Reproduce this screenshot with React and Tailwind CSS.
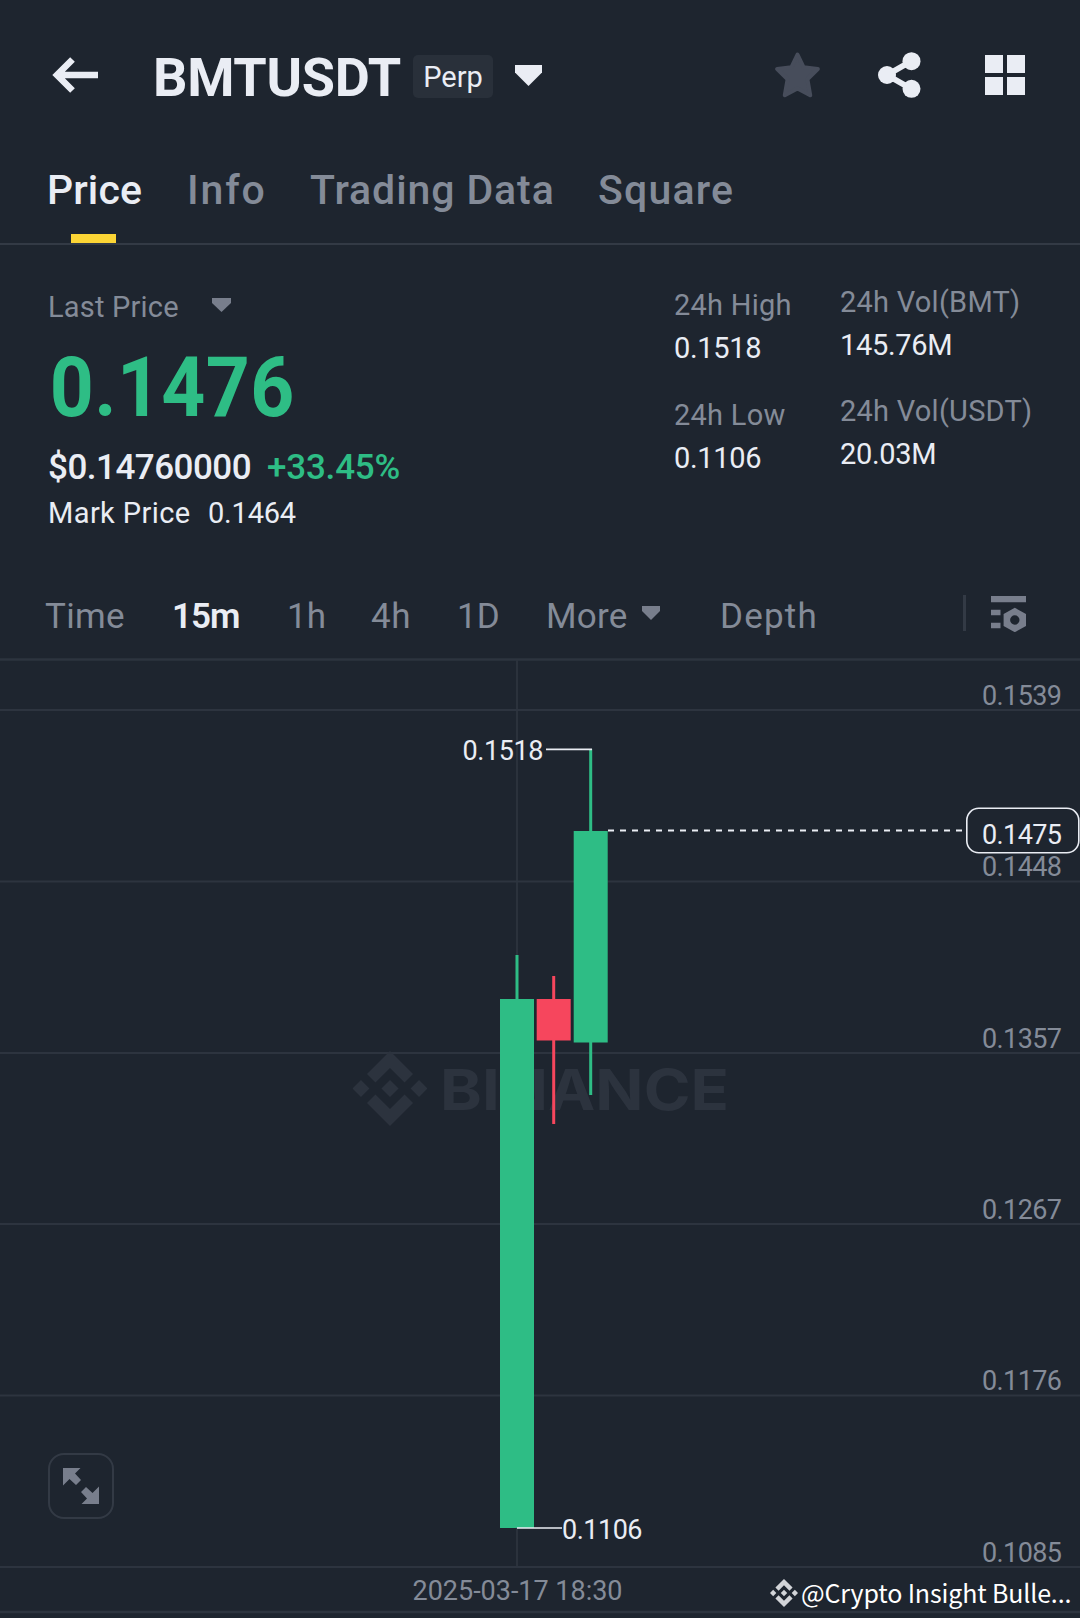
const tabs = [
  { label: 'Price', className: 'w-[140px] tracking-[0.1px]', active: true },
  { label: 'Info', className: 'w-[123px] tracking-[1.9px]' },
  { label: 'Trading Data', className: 'w-[288px] tracking-[0.9px]' },
  { label: 'Square', className: 'tracking-[1.2px]' },
]

const intervals = [
  { label: 'Time', className: 'w-[127px] tracking-[0.3px]' },
  { label: '15m', className: 'w-[115px] font-semibold tracking-[-1px] text-[#eaedf4]' },
  { label: '1h', className: 'w-[84px]' },
  { label: '4h', className: 'w-[86px] tracking-[0.5px]' },
  { label: '1D', className: 'w-[89px]' },
]

const gridLines = [
  { y: 52, label: '0.1539' },
  { y: 223.5, label: '0.1448' },
  { y: 395, label: '0.1357' },
  { y: 566, label: '0.1267' },
  { y: 737.5, label: '0.1176' },
  { y: 909, label: '0.1085' },
]

const candles = [
  { x: 517, top: 341, bottom: 870, high: 297, low: 870, color: '#2ebd85' },
  { x: 553.7, top: 341, bottom: 382.5, high: 318, low: 466, color: '#f6465d' },
  { x: 590.7, top: 173, bottom: 384.5, high: 91, low: 437, color: '#2ebd85' },
]

function Caret({ className }) {
  return (
    <svg viewBox="0 0 27 21" preserveAspectRatio="none" fill="currentColor" className={className}>
      <path d="M0 0h27v7.5L13.5 21 0 7.5z" />
    </svg>
  )
}

function BinanceLogo(props) {
  return (
    <svg viewBox="0 0 126.61 126.61" fill="currentColor" {...props}>
      <path d="M38.73 53.2 63.3 28.63l24.59 24.59 14.3-14.3L63.3 0 24.43 38.9zM0 63.31l14.3-14.3 14.3 14.3-14.3 14.3zM38.73 73.41 63.3 98l24.59-24.6 14.31 14.29-38.9 38.92-38.87-38.88zM98 63.31l14.3-14.3 14.3 14.3-14.3 14.3zM77.83 63.3 63.3 48.78 48.8 63.29l14.5 14.5z" />
    </svg>
  )
}

function Header() {
  return (
    <header className="flex h-[150px] items-center pl-[52px] pr-[55px] text-[#eaedf4]">
      <svg viewBox="0 0 46 36" className="h-9 w-[46px]" fill="none" stroke="currentColor" strokeWidth="6.6">
        <path d="M46 18H5M20.5 2.5 5 18l15.5 15.5" />
      </svg>
      <h1 className="ml-[55px] w-[260px] whitespace-nowrap pt-1.5 text-[54px] font-bold leading-none tracking-[-0.3px]">BMTUSDT</h1>
      <span className="mt-0.5 h-[43px] w-20 rounded-[5px] bg-[#29303a] text-center text-[29px] leading-[45px]">Perp</span>
      <Caret className="ml-[22px] h-[21px] w-[27px]" />

      <div className="ml-auto flex items-center">
        <svg viewBox="0 0 45 46" className="h-[46px] w-[45px] text-[#474d5b]" fill="currentColor" stroke="currentColor" strokeWidth="4" strokeLinejoin="round">
          <path d="M22.5 2.5 28.5 15.2 42.8 17 32.4 27.2 35.2 43.2 22.5 36.4 9.8 43.2 12.6 27.2 2.2 17 16.5 15.2z" />
        </svg>
        <svg viewBox="0 0 44 46" className="ml-[57px] h-[46px] w-11" fill="currentColor">
          <path d="M10 23 34.5 9M10 23l24.5 14" stroke="currentColor" strokeWidth="6" />
          <circle cx="10" cy="23" r="9" />
          <circle cx="34.5" cy="9.2" r="9" />
          <circle cx="34.5" cy="36.8" r="9" />
        </svg>
        <div className="ml-[64.5px] grid grid-cols-2 gap-1">
          <i className="size-[18px] bg-current" />
          <i className="size-[18px] bg-current" />
          <i className="size-[18px] bg-current" />
          <i className="size-[18px] bg-current" />
        </div>
      </div>
    </header>
  )
}

function Tabs() {
  return (
    <nav className="flex h-[95px] border-b-2 border-[#333a45] pl-[47px] text-[41px] font-medium text-[#848b98]">
      {tabs.map((tab) => (
        <div key={tab.label} className={tab.className}>
          <div className={tab.active ? 'leading-[81px] text-[#eaedf4]' : 'leading-[81px]'}>{tab.label}</div>
          {tab.active && <div className="ml-6 mt-[3px] h-[9px] w-[45px] bg-[#fcd535]" />}
        </div>
      ))}
    </nav>
  )
}

function Stat({ label, value }) {
  return (
    <div className="leading-[43px]">
      <div className="tracking-[0.25px] text-[#848b98]">{label}</div>
      <div className="tracking-[-0.3px] text-[#eaedf4]">{value}</div>
    </div>
  )
}

function Summary() {
  return (
    <section className="flex h-[327px] pl-[48px] pt-[36px] text-[29px] text-[#eaedf4]">
      <div className="w-[626px] pt-[6px]">
        <div className="flex items-center leading-10 text-[#848b98]">
          <span className="w-[164px] tracking-[0.2px]">Last Price</span>
          <Caret className="-mt-1 h-3.5 w-[19px] text-[#787e8c]" />
        </div>
        <div className="mt-[13px] origin-left scale-x-[0.92] pl-[2px] text-[83.5px] font-bold leading-[96px] tracking-[0.4px] text-[#2ebd85]">0.1476</div>
        <div className="mt-[9px] flex text-[35px] font-medium leading-[46px]">
          <span className="w-[219px] tracking-[-0.5px]">$0.14760000</span>
          <span className="tracking-[-0.2px] text-[#2ebd85]">+33.45%</span>
        </div>
        <div className="-mt-px flex leading-[46px]">
          <span className="w-[160px] tracking-[0.4px]">Mark Price</span>
          <span className="tracking-[-0.2px]">0.1464</span>
        </div>
      </div>
      <div className="flex w-[166px] flex-col gap-6 pt-[3px]">
        <Stat label="24h High" value="0.1518" />
        <Stat label="24h Low" value="0.1106" />
      </div>
      <div className="flex flex-col gap-[23px]">
        <Stat label="24h Vol(BMT)" value="145.76M" />
        <Stat label="24h Vol(USDT)" value="20.03M" />
      </div>
    </section>
  )
}

function IntervalBar() {
  return (
    <div className="flex h-[86px] items-center pl-[45px] text-[35px] text-[#848b98]">
      {intervals.map((item) => (
        <span key={item.label} className="pt-[5px]">
          <span className={`block ${item.className}`}>{item.label}</span>
        </span>
      ))}
      <span className="w-[96px] pt-[5px] tracking-[0.2px]">More</span>
      <Caret className="-mt-1 h-3.5 w-[18px] text-[#787e8c]" />
      <span className="ml-[60px] w-[243px] pt-[5px] tracking-[1.2px]">Depth</span>
      <div className="-mt-1 h-9 w-[2.5px] bg-[#333a45]" />
      <svg viewBox="0 0 35 36" className="-mt-0.5 ml-[25.5px] h-9 w-[35px] text-[#787e8c]" fill="currentColor">
        <path d="M0 0h35v6.3H0zM0 13.7h9.5v5.6H0zM0 26.7h9.5v5.6H0z" />
        <path fillRule="evenodd" d="M23.8 11.8 35 18v12l-11.2 6.2L12.6 30V18zM23.8 19.3a4.7 4.7 0 1 0 0 9.4 4.7 4.7 0 0 0 0-9.4z" />
      </svg>
    </div>
  )
}

function Chart() {
  return (
    <section className="relative h-[960px]">
      <svg viewBox="0 0 1080 960" className="h-[960px] w-[1080px]" fontSize="27">
        <path d="M0 1.5h1080M0 954h1080" stroke="#2d343f" strokeWidth="2.5" />
        <path d="M517 2v907" stroke="#2b323c" strokeWidth="2" />
        {gridLines.map((line) => (
          <g key={line.label}>
            <path d={`M0 ${line.y}h1080`} stroke="#2d343f" strokeWidth="2" />
            <text x="982" y={line.y - 5.3} textLength="80" fill="#848b98">{line.label}</text>
          </g>
        ))}

        {/* watermark */}
        <BinanceLogo x="352.5" y="393" width="75" height="75" color="#2c333e" />
        <text x="440" y="452" fontSize="56.5" fontWeight="700" fill="#2c333e" textLength="289" lengthAdjust="spacingAndGlyphs" className="font-['Inter',sans-serif]">BINANCE</text>

        {candles.map((c) => (
          <g key={c.x} fill={c.color}>
            <rect x={c.x - 1.5} y={c.high} width="3" height={c.low - c.high} />
            <rect x={c.x - 17} y={c.top} width="34" height={c.bottom - c.top} />
          </g>
        ))}

        <g fill="#eaedf4">
          <text x="462.5" y="102" textLength="81">0.1518</text>
          <text x="562" y="881" textLength="80.5">0.1106</text>
        </g>
        <path d="M546 91.3h46M517 870h45" stroke="#eaedf4" strokeWidth="1.7" />
        <path d="M608 172.5h355" stroke="#eaedf4" strokeWidth="1.8" strokeDasharray="6 6" />
        <rect x="966.8" y="150.3" width="112" height="44.5" rx="12" fill="#1e252f" stroke="#eaedf4" strokeWidth="1.6" />
        <text x="982" y="186" textLength="80" fill="#eaedf4">0.1475</text>
        <text x="412.5" y="942" textLength="210" fill="#848b98">2025-03-17 18:30</text>
      </svg>

      <button className="absolute left-[48px] top-[795px] flex size-[66px] items-center justify-center rounded-[16px] border-[2.5px] border-[#333a45] text-[#787e8c]">
        <svg viewBox="0 0 36 36" className="size-9" fill="currentColor">
          <path d="M0 0h17.5L12 5.5l6 6.5-5 5-6.5-6L0 17.5zM36 36H18.5l5.5-5.5-6-6.5 5-5 6.5 6 6.5-6.5z" />
        </svg>
      </button>

      <div className="absolute left-[770px] top-[917px] flex items-center whitespace-nowrap text-white">
        <BinanceLogo className="size-7 text-[#d2d4d8]" />
        <span className="ml-[3px] font-['Noto_Sans_CJK_SC',sans-serif] text-[25px] leading-[35px] tracking-[-0.15px]">@Crypto Insight Bulle...</span>
      </div>
    </section>
  )
}

export default function App() {
  return (
    <main className="h-[1618px] w-[1080px] overflow-hidden bg-[#1e252f] font-['Roboto',sans-serif]">
      <Header />
      <Tabs />
      <Summary />
      <IntervalBar />
      <Chart />
    </main>
  )
}
